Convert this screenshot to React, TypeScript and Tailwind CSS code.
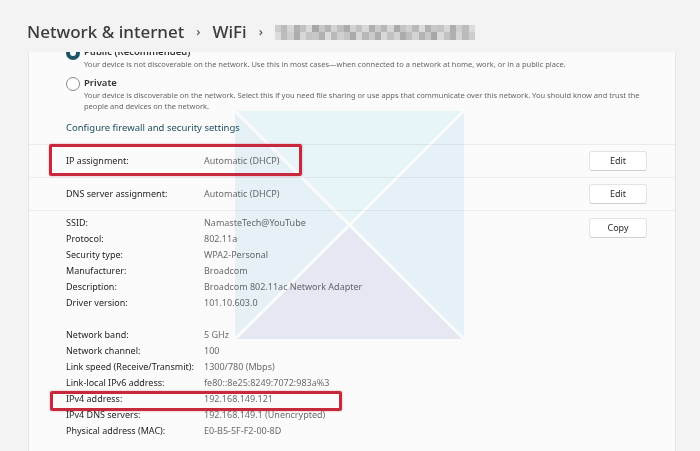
import React from "react";

const font = { fontFamily: '"Segoe UI", "Noto Sans", "Open Sans", sans-serif' };

const blurShades = [
  "#c9c9c9", "#b5b5b5", "#d2d2d2", "#a9a9a9", "#bdbdbd", "#d8d8d8", "#9f9f9f", "#c3c3c3",
  "#adadad", "#d0d0d0", "#b9b9b9", "#a5a5a5", "#cfcfcf", "#bcbcbc", "#d6d6d6", "#a8a8a8",
  "#c6c6c6", "#b1b1b1", "#d3d3d3", "#a3a3a3", "#c0c0c0", "#cdcdcd", "#b3b3b3", "#d9d9d9",
  "#aaaaaa", "#c4c4c4", "#bfbfbf", "#d4d4d4", "#a6a6a6", "#cacaca", "#b7b7b7", "#dadada",
];

const Blurred = () => (
  <div className="flex h-[15px] w-[200px] flex-col opacity-90 blur-[0.6px]">
    <div className="flex h-1/2">
      {blurShades.map((c, i) => (
        <span key={i} className="flex-1" style={{ background: c }} />
      ))}
    </div>
    <div className="flex h-1/2">
      {[...blurShades].reverse().map((c, i) => (
        <span key={i} className="flex-1" style={{ background: c }} />
      ))}
    </div>
  </div>
);

const Button = ({ children }: { children: React.ReactNode }) => (
  <button className="h-[20px] w-[58px] rounded-[3px] border border-[#e3e3e3] border-b-[#d0d0d0] bg-white text-[9px] text-[#2b2b2b]">
    {children}
  </button>
);

const Row = ({ label, value, action }: { label: string; value: string; action: string }) => (
  <div className="flex h-[33px] items-center border-b border-[#ececec] pl-[37px] pr-[28px]">
    <span className="w-[138px] text-[#1f1f1f]">{label}</span>
    <span className="flex-1 text-[#6b6b6b]">{value}</span>
    <Button>{action}</Button>
  </div>
);

const Info = ({ label, value }: { label: string; value: string }) => (
  <div className="flex h-[16px] items-center">
    <span className="w-[138px] text-[#1f1f1f]">{label}</span>
    <span className="text-[#6b6b6b]">{value}</span>
  </div>
);

const Watermark = () => (
  <svg
    className="pointer-events-none absolute left-[235px] top-[111px] mix-blend-multiply"
    width="229"
    height="228"
    viewBox="0 0 229 228"
  >
    <polygon points="0,0 229,0 114.5,114" fill="#ebf8fc" />
    <polygon points="0,0 0,228 114.5,114" fill="#e9f5fb" />
    <polygon points="229,0 229,228 114.5,114" fill="#e9f5fb" />
    <polygon points="0,228 229,228 114.5,114" fill="#e9ecf7" />
    <line x1="0" y1="0" x2="229" y2="228" stroke="#ffffff" strokeWidth="3" />
    <line x1="229" y1="0" x2="0" y2="228" stroke="#ffffff" strokeWidth="3" />
  </svg>
);

export default function App() {
  return (
    <div className="relative h-[451px] w-[700px] overflow-hidden bg-[#f3f3f3] text-[9px]" style={font}>
      <header className="flex h-[52px] items-center gap-[12px] pl-[27px] pt-[12px] text-[17px] font-medium text-[#3a3a3a]">
        <span>Network &amp; internet</span>
        <span className="text-[13px] text-[#555]">›</span>
        <span>WiFi</span>
        <span className="text-[13px] text-[#555]">›</span>
        <Blurred />
      </header>

      <div className="h-[399px] overflow-hidden">
        <div className="-mt-[24px] ml-[28px] w-[648px] rounded-[4px] border border-[#e6e6e6] bg-[#fbfbfb]">
          {/* network profile */}
          <div className="pl-[37px] pr-[22px] pt-[16px]">
            <div className="flex gap-[4px]">
              <span className="mt-[1px] h-[14px] w-[14px] shrink-0 rounded-full border-[4px] border-[#1e5566] bg-white" />
              <div>
                <div className="text-[9.5px] font-semibold leading-[14px] text-[#333]">Public (Recommended)</div>
                <div className="text-[7.5px] leading-[11px] text-[#666]">
                  Your device is not discoverable on the network. Use this in most cases—when connected to a network at home, work, or in a public place.
                </div>
              </div>
            </div>
            <div className="mt-[6px] flex gap-[4px]">
              <span className="mt-[1px] h-[14px] w-[14px] shrink-0 rounded-full border border-[#8a8a8a] bg-white" />
              <div>
                <div className="text-[9.5px] font-semibold leading-[14px] text-[#333]">Private</div>
                <div className="text-[7.5px] leading-[11px] text-[#666]">
                  Your device is discoverable on the network. Select this if you need file sharing or use apps that communicate over this network. You should know and trust the people and devices on the network.
                </div>
              </div>
            </div>
            <div className="flex h-[32px] items-center text-[9.5px] text-[#1c4f60]">
              Configure firewall and security settings
            </div>
          </div>

          <div className="border-t border-[#ececec]">
            <Row label="IP assignment:" value="Automatic (DHCP)" action="Edit" />
            <Row label="DNS server assignment:" value="Automatic (DHCP)" action="Edit" />
          </div>

          <div className="flex pl-[37px] pr-[28px] pt-[4px]">
            <div className="flex-1">
              <Info label="SSID:" value="NamasteTech@YouTube" />
              <Info label="Protocol:" value="802.11a" />
              <Info label="Security type:" value="WPA2-Personal" />
              <Info label="Manufacturer:" value="Broadcom" />
              <Info label="Description:" value="Broadcom 802.11ac Network Adapter" />
              <Info label="Driver version:" value="101.10.603.0" />
              <div className="h-[16px]" />
              <Info label="Network band:" value="5 GHz" />
              <Info label="Network channel:" value="100" />
              <Info label="Link speed (Receive/Transmit):" value="1300/780 (Mbps)" />
              <Info label="Link-local IPv6 address:" value="fe80::8e25:8249:7072:983a%3" />
              <Info label="IPv4 address:" value="192.168.149.121" />
              <Info label="IPv4 DNS servers:" value="192.168.149.1 (Unencrypted)" />
              <Info label="Physical address (MAC):" value="E0-B5-5F-F2-00-8D" />
              <div className="h-[40px]" />
            </div>
            <div className="pt-[3px]">
              <Button>Copy</Button>
            </div>
          </div>
        </div>
      </div>

      <Watermark />

      {/* red annotation boxes */}
      <div className="pointer-events-none absolute left-[49px] top-[144px] h-[32px] w-[253px] rounded-[2px] border-[3px] border-[#c8283c] shadow-[0_0_2px_rgba(200,40,60,0.5)]" />
      <div className="pointer-events-none absolute left-[50px] top-[391px] h-[20px] w-[292px] rounded-[2px] border-[3px] border-[#c8283c] shadow-[0_0_2px_rgba(200,40,60,0.5)]" />
    </div>
  );
}
